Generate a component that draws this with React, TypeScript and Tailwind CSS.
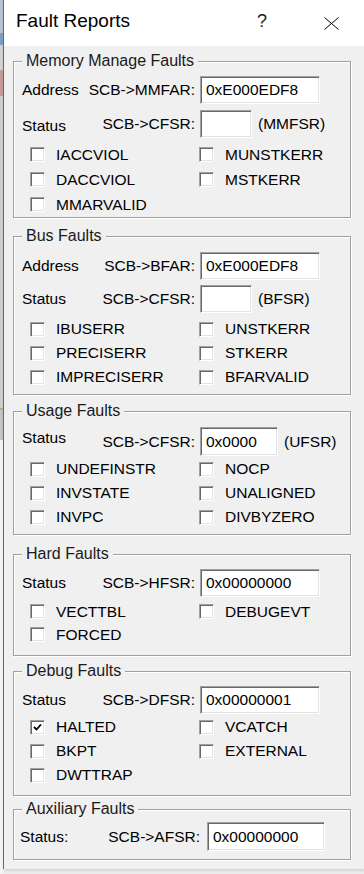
import React from 'react';

type Item = [string, boolean];

// sunken edit box, win32 style
function Field({ value, className }: { value: string; className: string }) {
  return (
    <div
      className={`h-full bg-white border border-t-[#a0a0a0] border-l-[#a0a0a0] border-b-white border-r-white shadow-[inset_1px_1px_0_#696969,inset_-1px_-1px_0_#e3e3e3] pl-[5px] flex items-center leading-none ${className}`}
    >
      {value}
    </div>
  );
}

function Box({ checked }: { checked: boolean }) {
  return (
    <div className="w-[15px] h-[15px] shrink-0 bg-white border border-t-[#a0a0a0] border-l-[#a0a0a0] border-b-white border-r-white shadow-[inset_1px_1px_0_#696969,inset_-1px_-1px_0_#e3e3e3] flex items-center justify-center">
      {checked && (
        <svg width="9" height="8" viewBox="0 0 9 8">
          <path d="M1 4 L3.5 6.5 L8 1.5" fill="none" stroke="#000" strokeWidth="1.8" />
        </svg>
      )}
    </div>
  );
}

function Group({ title, className, children }: { title: string; className: string; children: React.ReactNode }) {
  return (
    <div
      className={`relative ml-[9px] w-[338px] border border-[#a0a0a0] shadow-[inset_1px_1px_0_#fff,1px_1px_0_#fff] ${className}`}
    >
      <span className="absolute left-[8px] -top-[10px] bg-[#f0f0f0] px-[4px] text-[16px] leading-[18px] text-[#1a1a1a] whitespace-nowrap">
        {title}
      </span>
      {children}
    </div>
  );
}

function Checks({ items, rowCls, className }: { items: Item[]; rowCls: string; className: string }) {
  return (
    <div className={`ml-[16px] grid grid-cols-[169px_auto] ${className}`}>
      {items.map(([label, checked]) => (
        <div key={label} className={`flex items-center ${rowCls}`}>
          <Box checked={checked} />
          <span className="ml-[11px] leading-none">{label}</span>
        </div>
      ))}
    </div>
  );
}

function RegRow({
  left,
  label,
  value,
  fieldCls,
  suffix,
  className,
  leftCls = '',
}: {
  left: string;
  label: string;
  value: string;
  fieldCls: string;
  suffix?: string;
  className: string;
  leftCls?: string;
}) {
  return (
    <div className={`flex items-center pl-[8px] ${className}`}>
      <span className={`w-[64px] leading-[18px] ${leftCls}`}>{left}</span>
      <span className="w-[109px] text-right leading-none">{label}</span>
      <Field value={value} className={`ml-[5px] ${fieldCls}`} />
      {suffix && <span className="ml-[6px] leading-none">{suffix}</span>}
    </div>
  );
}

export default function App() {
  return (
    <div className="w-[364px] h-[874px] flex bg-[#ebebeb] overflow-hidden font-['Liberation_Sans',Arial,sans-serif] text-[15.5px] text-black">
      <div className="w-[3px] shrink-0 bg-[linear-gradient(to_bottom,#b9c5d2_0px,#b9c5d2_33px,#7f9fc6_33px,#7f9fc6_45px,#d2d2d2_45px,#d2d2d2_70px,#c99a9a_70px,#c99a9a_96px,#cfcfcf_96px,#cfcfcf_408px,#9fbf7f_408px,#9fbf7f_410px,#c4c4c4_410px,#c4c4c4_440px,#f4f4f4_440px)]" />
      <div className="w-[1px] shrink-0 bg-[#6d6d6d] h-[869px]" />

      <div className="flex-1 flex flex-col h-[869px] bg-[#f0f0f0] shadow-[0_1px_3px_rgba(0,0,0,0.15)]">
        {/* title bar */}
        <div className="h-[46px] shrink-0 bg-white flex items-start">
          <span className="ml-[12px] mt-[10px] text-[19px] leading-[22px]">Fault Reports</span>
          <span className="ml-auto mr-[23px] mt-[10px] w-[46px] text-center text-[18px] leading-[22px] text-[#222]">?</span>
          <span className="mr-[10px] mt-[17px] w-[46px] flex justify-center">
            <svg width="15" height="13" viewBox="0 0 15 13">
              <path d="M0.5 0.5 L14.5 12.5 M14.5 0.5 L0.5 12.5" stroke="#000" strokeWidth="1" fill="none" />
            </svg>
          </span>
        </div>

        <Group title="Memory Manage Faults" className="mt-[15px] h-[157px] pt-[14px]">
          <RegRow left="Address" label="SCB->MMFAR:" value="0xE000EDF8" fieldCls="w-[120px]" className="h-[28px]" />
          <RegRow
            left="Status"
            label="SCB->CFSR:"
            value=""
            fieldCls="w-[52px]"
            suffix="(MMFSR)"
            className="h-[28px] mt-[6px]"
            leftCls="translate-y-[2px]"
          />
          <Checks
            className="mt-[4px]"
            rowCls="h-[25px]"
            items={[
              ['IACCVIOL', false],
              ['MUNSTKERR', false],
              ['DACCVIOL', false],
              ['MSTKERR', false],
              ['MMARVALID', false],
            ]}
          />
        </Group>

        <Group title="Bus Faults" className="mt-[18px] h-[159px] pt-[15px]">
          <RegRow left="Address" label="SCB->BFAR:" value="0xE000EDF8" fieldCls="w-[120px]" className="h-[28px]" />
          <RegRow left="Status" label="SCB->CFSR:" value="" fieldCls="w-[52px]" suffix="(BFSR)" className="h-[28px] mt-[5px]" />
          <Checks
            className="mt-[4px]"
            rowCls="h-[24px]"
            items={[
              ['IBUSERR', false],
              ['UNSTKERR', false],
              ['PRECISERR', false],
              ['STKERR', false],
              ['IMPRECISERR', false],
              ['BFARVALID', false],
            ]}
          />
        </Group>

        <Group title="Usage Faults" className="mt-[16px] h-[124px] pt-[15px]">
          <RegRow
            left="Status"
            label="SCB->CFSR:"
            value="0x0000"
            fieldCls="w-[78px]"
            suffix="(UFSR)"
            className="h-[29px]"
            leftCls="-translate-y-[4px]"
          />
          <Checks
            className="mt-[1px]"
            rowCls="h-[24px]"
            items={[
              ['UNDEFINSTR', false],
              ['NOCP', false],
              ['INVSTATE', false],
              ['UNALIGNED', false],
              ['INVPC', false],
              ['DIVBYZERO', false],
            ]}
          />
        </Group>

        <Group title="Hard Faults" className="mt-[19px] h-[102px] pt-[14px]">
          <RegRow left="Status" label="SCB->HFSR:" value="0x00000000" fieldCls="w-[120px]" className="h-[28px]" />
          <Checks
            className="mt-[3px]"
            rowCls="h-[23px]"
            items={[
              ['VECTTBL', false],
              ['DEBUGEVT', false],
              ['FORCED', false],
            ]}
          />
        </Group>

        <Group title="Debug Faults" className="mt-[15px] h-[125px] pt-[14px]">
          <RegRow left="Status" label="SCB->DFSR:" value="0x00000001" fieldCls="w-[120px]" className="h-[28px]" />
          <Checks
            className="mt-[1px]"
            rowCls="h-[24px]"
            items={[
              ['HALTED', true],
              ['VCATCH', false],
              ['BKPT', false],
              ['EXTERNAL', false],
              ['DWTTRAP', false],
            ]}
          />
        </Group>

        <Group title="Auxiliary Faults" className="mt-[13px] h-[51px] pt-[12px]">
          <div className="flex items-center h-[29px] pl-[6px]">
            <span className="w-[80px] leading-none">Status:</span>
            <span className="w-[100px] text-right leading-none">SCB-&gt;AFSR:</span>
            <Field value="0x00000000" className="ml-[7px] w-[118px]" />
          </div>
        </Group>
      </div>
    </div>
  );
}
